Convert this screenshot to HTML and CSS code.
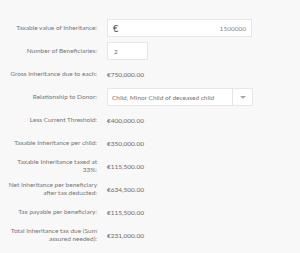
FILE: index.html
```html
<!DOCTYPE html>
<html>
<head>
<meta charset="utf-8">
<link rel="stylesheet" href="styles.css">
</head>
<body>
<div class="form">
  <div class="label">Taxable value of Inheritance:</div>
  <div class="value"><div class="input wide"><span class="euro">€</span><span class="num">1500000</span></div></div>

  <div class="label">Number of Beneficiaries:</div>
  <div class="value"><div class="input small"><span>2</span></div></div>

  <div class="label">Gross Inheritance due to each:</div>
  <div class="value">€750,000.00</div>

  <div class="label">Relationship to Donor:</div>
  <div class="value"><div class="select"><span class="sel-text">Child, Minor Child of deceased child</span><span class="sel-btn"><span class="tri"></span></span></div></div>

  <div class="label">Less Current Threshold:</div>
  <div class="value">€400,000.00</div>

  <div class="label">Taxable Inheritance per child:</div>
  <div class="value">€350,000.00</div>

  <div class="label">Taxable Inheritance taxed at 33%:</div>
  <div class="value">€115,500.00</div>

  <div class="label">Net Inheritance per beneficiary after tax deducted:</div>
  <div class="value">€634,500.00</div>

  <div class="label">Tax payable per beneficiary:</div>
  <div class="value">€115,500.00</div>

  <div class="label">Total Inheritance tax due (Sum assured needed):</div>
  <div class="value">€231,000.00</div>
</div>
</body>
</html>
```
FILE: styles.css
```css
html, body {
  margin: 0;
  padding: 0;
  background: #f8f8f8;
}
body {
  font-family: "Lato", "Liberation Sans", sans-serif;
  font-size: 6.5px;
  color: #666;
  width: 300px;
  height: 253px;
  overflow: hidden;
}
.form {
  display: grid;
  grid-template-columns: 93px 146px;
  grid-auto-rows: 18px;
  column-gap: 10px;
  row-gap: 5px;
  padding: 19px 0 0 4px;
}
.label {
  text-align: right;
  line-height: 8px;
  display: flex;
  align-items: center;
  justify-content: flex-end;
  color: #777;
}
.value {
  display: flex;
  align-items: center;
  color: #6a6a6a;
}
.input {
  box-sizing: border-box;
  height: 18px;
  background: #fff;
  border: 1px solid #e6e6e6;
  display: flex;
  align-items: center;
  padding: 0 5px;
}
.wide {
  width: 145px;
  justify-content: space-between;
}
.small {
  width: 41px;
  padding-left: 6px;
}
.euro {
  font-size: 9px;
  color: #444;
}
.num {
  color: #888;
}
.select {
  box-sizing: border-box;
  width: 146px;
  height: 18px;
  background: #fff;
  border: 1px solid #e6e6e6;
  display: flex;
  align-items: stretch;
}
.sel-text {
  flex: 1;
  display: flex;
  align-items: center;
  padding-left: 4px;
  color: #777;
}
.sel-btn {
  width: 19px;
  border-left: 1px solid #e6e6e6;
  display: flex;
  align-items: center;
  justify-content: center;
}
.tri {
  width: 0;
  height: 0;
  border-left: 3px solid transparent;
  border-right: 3px solid transparent;
  border-top: 3px solid #aaa;
}
```
